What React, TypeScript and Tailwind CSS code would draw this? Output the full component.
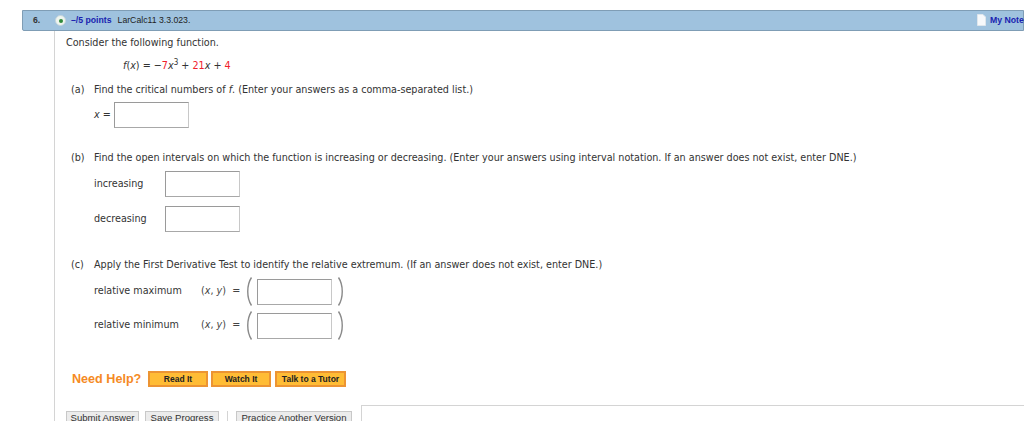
import React from 'react'

const sans = "font-['DejaVu_Sans_Condensed','DejaVu_Sans',sans-serif]"
const arial = "font-['Liberation_Sans',Arial,sans-serif]"

const AnswerBox = ({ className = 'w-[75px] h-[26px]' }: { className?: string }) => (
  <div className={`${className} shrink-0 bg-white border border-t-[#9a9a9a] border-l-[#9a9a9a] border-r-[#c8c8c8] border-b-[#a8a8a8]`} />
)

const Paren = ({ flip = false }: { flip?: boolean }) => (
  <svg width="8" height="29" viewBox="0 0 8 29" className={flip ? 'shrink-0 -scale-x-100' : 'shrink-0'}>
    <path d="M6.5 0.5C1.5 8 1.5 21 6.5 28.5" fill="none" stroke="#8a8a8a" strokeWidth="1.4" />
  </svg>
)

const HelpButton = ({ label, className }: { label: string; className: string }) => (
  <div className={`${className} h-[16px] bg-[#ffbc35] border-2 border-[#ec9433] flex items-center justify-center text-[8.5px] font-bold text-[#222] ${arial}`}>
    {label}
  </div>
)

const GrayButton = ({ label, className }: { label: string; className: string }) => (
  <div className={`${className} h-[20px] bg-[#ececec] border border-[#c8c8c8] text-center text-[9.6px] leading-[11px] text-[#333] ${arial}`}>
    {label}
  </div>
)

const PointRow = ({ label, className }: { label: string; className: string }) => (
  <div className={`flex items-center h-[29px] ${className}`}>
    <span className="w-[107px]">{label}</span>
    <span className="w-[44px] text-[#444] whitespace-nowrap">(<i>x</i>, <i>y</i>) &nbsp;=</span>
    <Paren />
    <AnswerBox className="w-[75px] h-[26px] ml-[4px]" />
    <span className="w-[5px]" />
    <Paren flip />
  </div>
)

export default function App() {
  return (
    <div className={`h-[421px] w-[1024px] overflow-hidden bg-white pt-[10px] pl-[22px] text-[#333] text-[10.7px] ${sans}`}>
      {/* Question header */}
      <div className={`h-[21px] flex items-center bg-[#9fc2de] border border-[#7f9db5] rounded-bl-[2px] text-[8.7px] ${arial}`}>
        <span className="w-[32px] pl-[10px] font-bold text-[#333]">6.</span>
        <span className="w-[11px] h-[11px] rounded-full bg-[#eef4ee] border border-[#c4d4dc] flex items-center justify-center">
          <span className="w-[4px] h-[4px] rounded-full bg-[#2f8a3c]" />
        </span>
        <span className="ml-[5px] font-bold text-[#1a1fb0]">–/5 points</span>
        <span className="ml-[6px] text-[#222]">LarCalc11 3.3.023.</span>
        <div className="ml-auto flex items-center">
          <svg width="9" height="12" viewBox="0 0 9 12" className="mr-[4px]">
            <path d="M0.5 0.5H6L8.5 3V11.5H0.5Z" fill="#f7f9fb" stroke="#dfe6ec" />
          </svg>
          <span className="font-bold text-[#1a1fb0] whitespace-nowrap w-[33px]">My Notes</span>
        </div>
      </div>

      {/* Question body */}
      <div className="ml-[32px] pl-[11px] h-[400px] border-l border-[#d4d4d4]">
        <p className="pt-[5px] leading-[14px]">Consider the following function.</p>
        <p className="pl-[57px] mt-[9px] leading-[14px]">
          <i>f</i>(<i>x</i>) = −<span className="text-[#f0202a]">7</span><i>x</i><sup className="text-[8px]">3</sup> + <span className="text-[#f0202a]">21</span><i>x</i> + <span className="text-[#f0202a]">4</span>
        </p>
        <p className="pl-[5px] mt-[10px] leading-[14px] flex">
          <span className="w-[23px]">(a)</span>
          <span>Find the critical numbers of <i>f</i>. (Enter your answers as a comma-separated list.)</span>
        </p>
        <div className="pl-[28px] mt-[5px] flex items-center gap-[4px]">
          <span className="w-[16px] whitespace-nowrap"><i>x</i> =</span>
          <AnswerBox />
        </div>

        <p className="pl-[5px] mt-[23px] leading-[14px] flex">
          <span className="w-[23px]">(b)</span>
          <span>Find the open intervals on which the function is increasing or decreasing. (Enter your answers using interval notation. If an answer does not exist, enter DNE.)</span>
        </p>
        <div className="pl-[28px] mt-[6px] flex items-center">
          <span className="w-[71px]">increasing</span>
          <AnswerBox />
        </div>
        <div className="pl-[28px] mt-[9px] flex items-center">
          <span className="w-[71px]">decreasing</span>
          <AnswerBox />
        </div>

        <p className="pl-[5px] mt-[26px] leading-[14px] flex">
          <span className="w-[23px]">(c)</span>
          <span>Apply the First Derivative Test to identify the relative extremum. (If an answer does not exist, enter DNE.)</span>
        </p>
        <PointRow label="relative maximum" className="pl-[28px] mt-[5px]" />
        <PointRow label="relative minimum" className="pl-[28px] mt-[5px]" />

        {/* Help buttons */}
        <div className="pl-[6px] mt-[30px] flex items-center">
          <span className={`w-[76px] text-[12.6px] font-bold text-[#f58a24] ${arial}`}>Need Help?</span>
          <HelpButton label="Read It" className="w-[60px]" />
          <HelpButton label="Watch It" className="w-[60px] ml-[3px]" />
          <HelpButton label="Talk to a Tutor" className="w-[71px] ml-[4px]" />
        </div>

        {/* Submit row */}
        <div className="mt-[16px] flex items-start">
          <GrayButton label="Submit Answer" className="w-[73px] mt-[6px]" />
          <GrayButton label="Save Progress" className="w-[74px] mt-[6px] ml-[6px]" />
          <span className="w-px h-[20px] bg-[#d4d4d4] mt-[6px] ml-[8px]" />
          <GrayButton label="Practice Another Version" className="w-[116px] mt-[6px] ml-[8px]" />
          <div className="ml-[9px] flex-1 h-[20px] border-l border-t border-[#d4d4d4]" />
        </div>
      </div>
    </div>
  )
}
